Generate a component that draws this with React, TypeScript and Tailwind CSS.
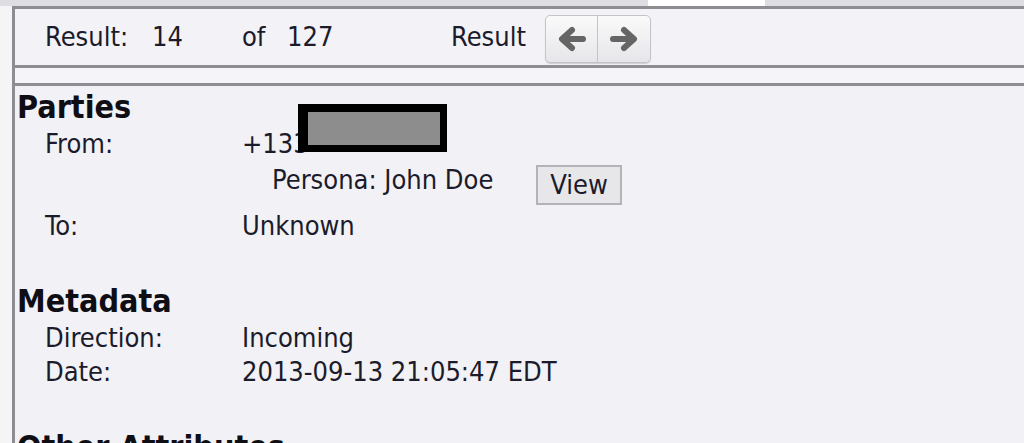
import type { ReactNode } from "react";

const FONT = "font-['DejaVu_Sans_Condensed','DejaVu_Sans',sans-serif]";

function Arrow({ dir }: { dir: "left" | "right" }) {
  // thick grey arrow as on the old toolbar buttons
  const d =
    dir === "left"
      ? "M7 14 H27 M16 5 L6 14 L16 23"
      : "M5 14 H25 M16 5 L26 14 L16 23";
  return (
    <svg width="32" height="28" viewBox="0 0 32 28">
      <path d={d} fill="none" stroke="#656565" strokeWidth="6" strokeLinecap="round" strokeLinejoin="round" />
    </svg>
  );
}

function Row({ label, children, h = "h-[32px]" }: { label: string; children: ReactNode; h?: string }) {
  return (
    <div className={`${h} flex items-center pl-[30px]`}>
      <span className="w-[197px] shrink-0">{label}</span>
      <div className="flex items-center whitespace-nowrap">{children}</div>
    </div>
  );
}

function Section({ title }: { title: string }) {
  return (
    <div className="h-[42px] flex items-center pl-[2px] text-[32px] font-bold text-[#0e0e14] whitespace-nowrap">
      {title}
    </div>
  );
}

export default function App() {
  return (
    <div className={`w-[1024px] h-[443px] overflow-hidden bg-[#f4f3f7] text-[27px] text-[#1b1b2b] ${FONT}`}>
      {/* tab strip remnants */}
      <div className="h-[6px] flex">
        <div className="w-[648px] bg-[#dedde2]" />
        <div className="w-[117px] bg-white" />
        <div className="flex-1 bg-[#dedde2]" />
      </div>

      <div className="flex h-full">
        <div className="w-[12px] shrink-0 bg-[#f5f5f5]" />
        <div className="flex-1 border-l-[3px] border-t-[3px] border-[#8e8e92] flex flex-col">
          {/* toolbar */}
          <div className="h-[59px] shrink-0 flex items-center pl-[30px] bg-[#f3f2f6] border-b-[3px] border-[#8e8e92]">
            <span className="w-[107px]">Result:</span>
            <span className="w-[90px]">14</span>
            <span className="w-[45px]">of</span>
            <span className="w-[164px]">127</span>
            <span className="w-[94px]">Result</span>
            <div className="flex h-[48px] mt-[4px] rounded-[5px] border border-[#c4c4c8] bg-gradient-to-b from-[#fafafa] to-[#e6e6ea] shadow-[0_1px_1px_rgba(0,0,0,0.15)]">
              <button className="w-[52px] flex items-center justify-center border-r border-[#c4c4c8]">
                <Arrow dir="left" />
              </button>
              <button className="w-[52px] flex items-center justify-center">
                <Arrow dir="right" />
              </button>
            </div>
          </div>
          <div className="h-[18px] shrink-0 bg-[#f5f4f8] border-b-[3px] border-[#8e8e92]" />

          {/* details */}
          <div className="flex-1 bg-[#f2f1f5]">
            <Section title="Parties" />
            <Row label="From:">
              <div className="relative">
                <span>+133</span>
                {/* redaction box */}
                <div className="absolute left-[56px] top-[-20px] w-[149px] h-[48px] bg-black p-[8px_7px_7px_10px]">
                  <div className="w-full h-full bg-[#8d8d8d]" />
                </div>
              </div>
            </Row>
            <div className="h-[44px] flex items-center pl-[257px]">
              <span className="w-[264px] mb-[3px] whitespace-nowrap">Persona: John Doe</span>
              <button className="h-[40px] w-[86px] mt-[6px] border-2 border-[#b4b4b8] bg-[#e7e7ea] flex items-center justify-center">
                View
              </button>
            </div>
            <Row label="To:" h="h-[44px]">Unknown</Row>
            <div className="h-[32px]" />
            <Section title="Metadata" />
            <Row label="Direction:" h="h-[33px]">Incoming</Row>
            <Row label="Date:" h="h-[35px]">2013-09-13 21:05:47 EDT</Row>
            <div className="h-[36px]" />
            <Section title="Other Attributes" />
          </div>
        </div>
      </div>
    </div>
  );
}
